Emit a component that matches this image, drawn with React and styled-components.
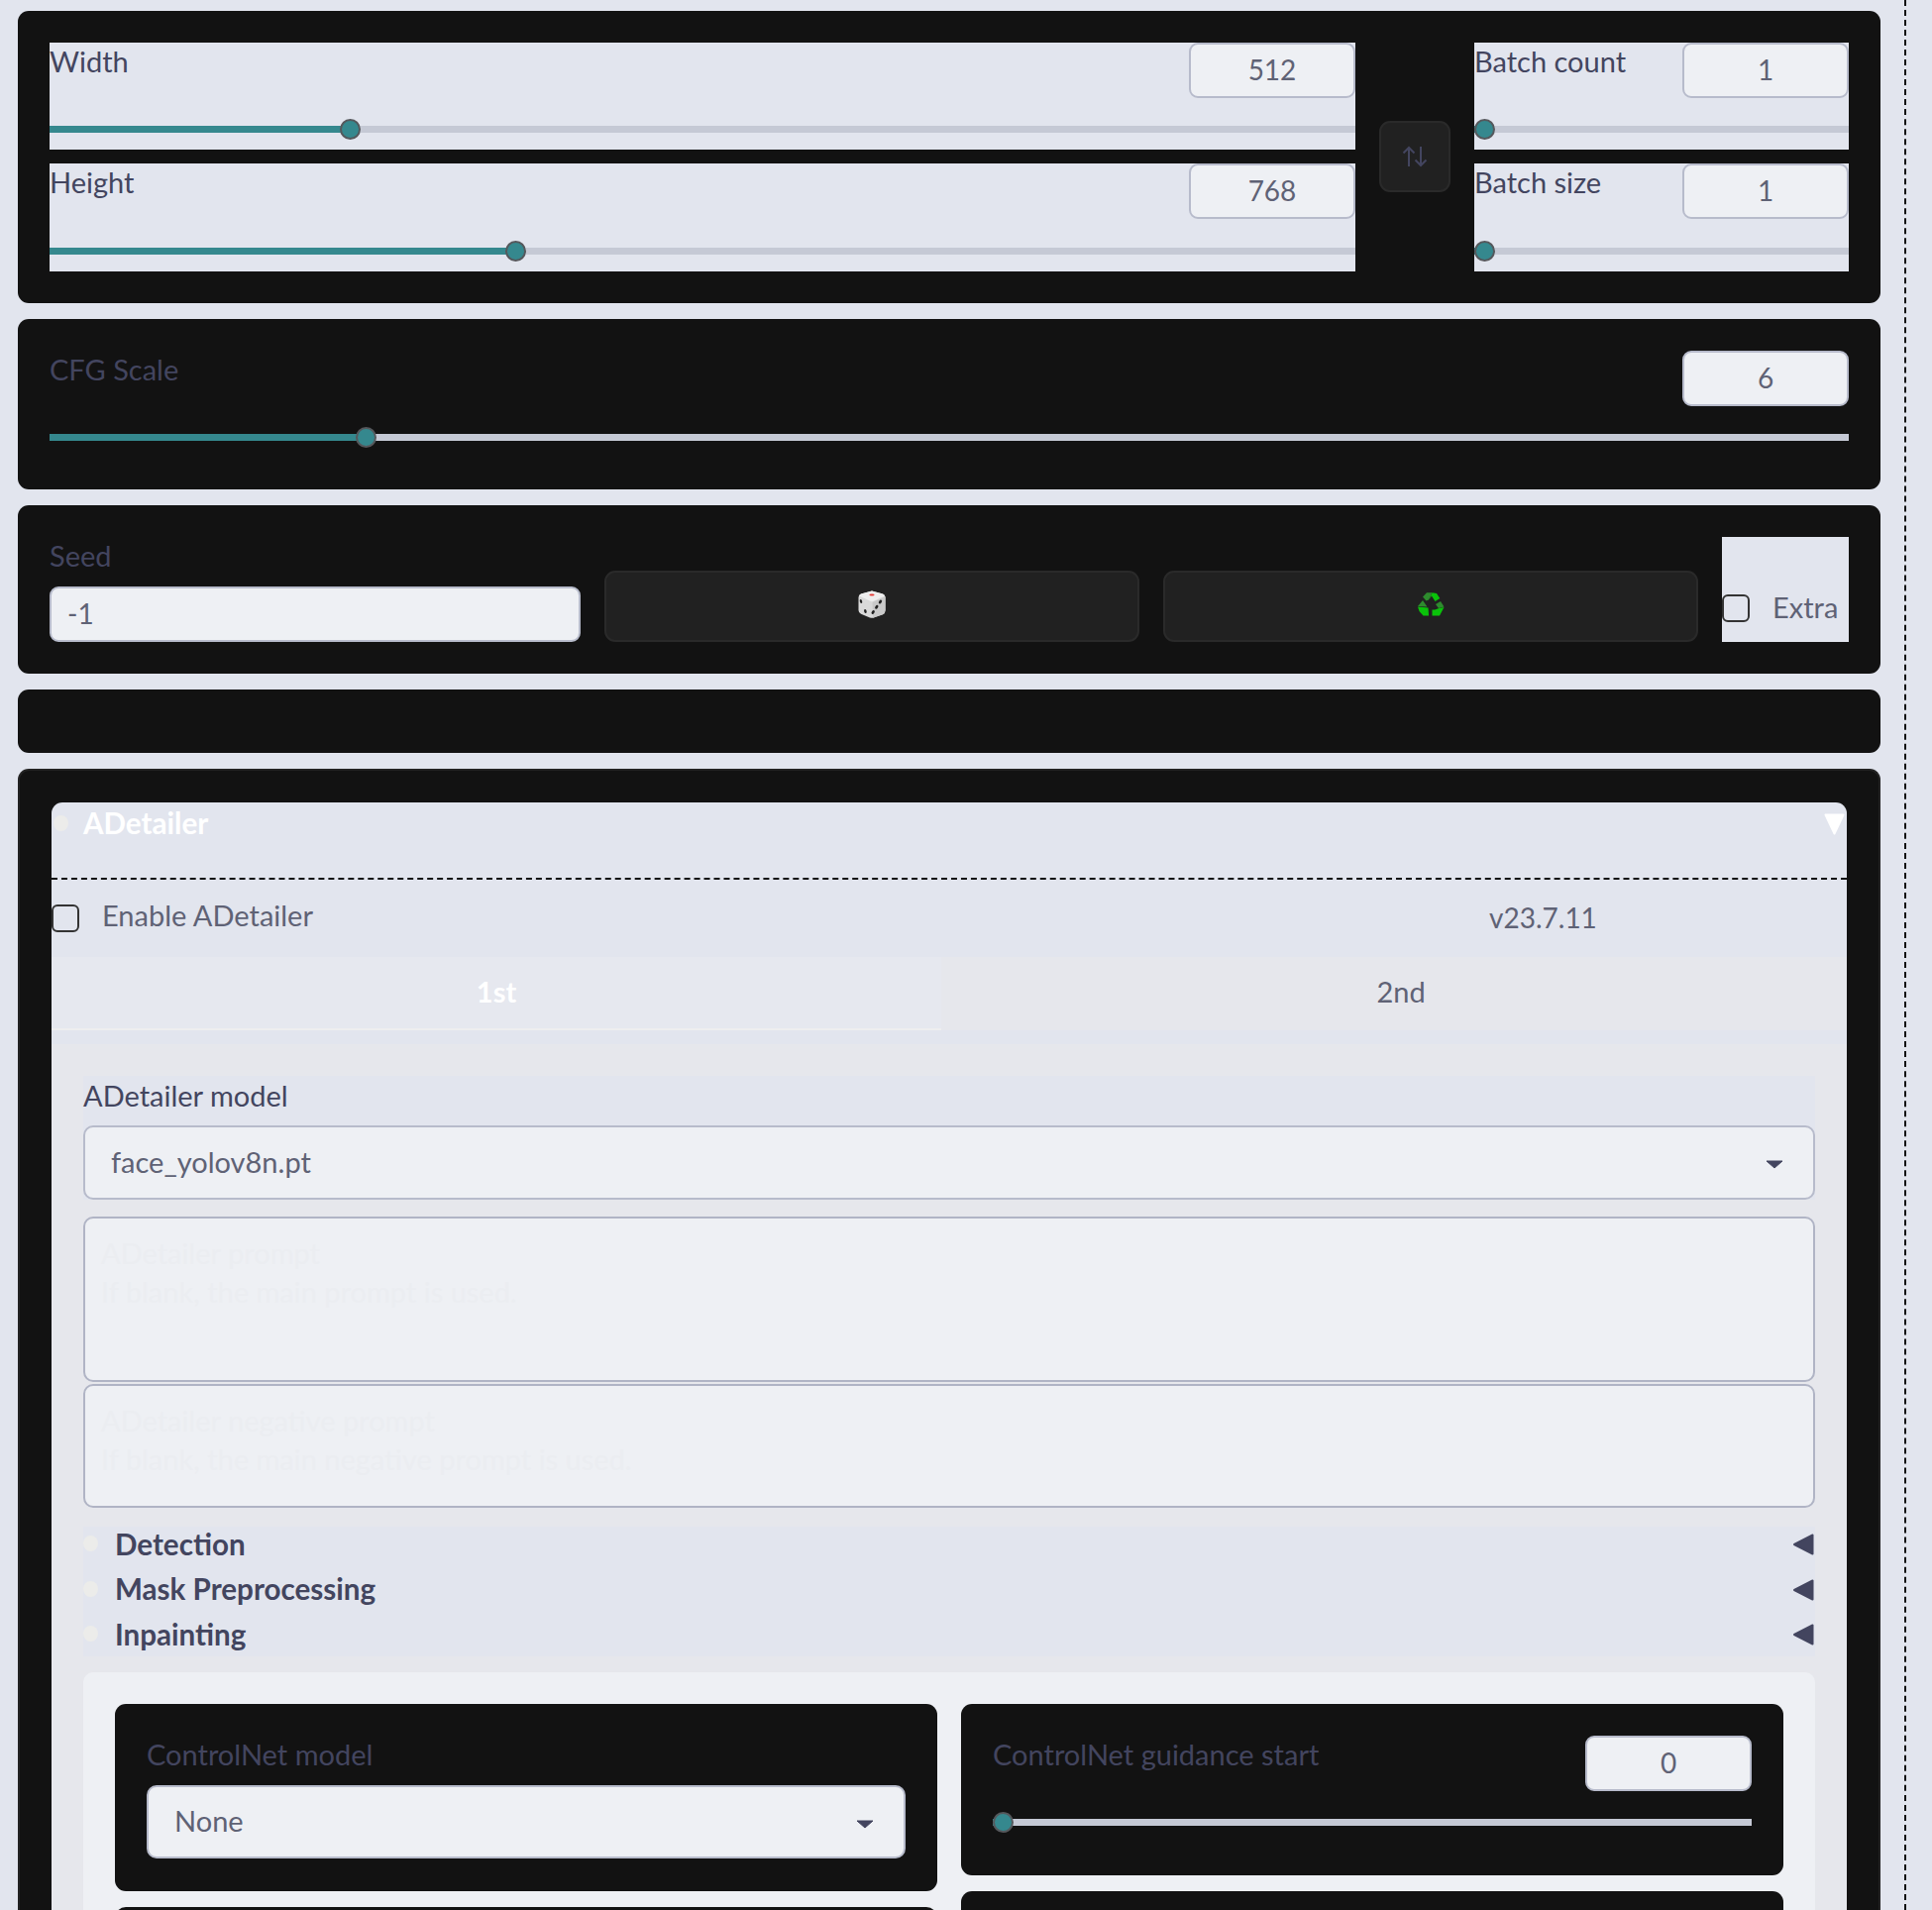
import React from "react";
import styled, { createGlobalStyle } from "styled-components";

const Global = createGlobalStyle`
  html, body { margin: 0; padding: 0; background: #e2e5ee; height: 1928px; overflow: hidden; }
  * { box-sizing: border-box; }
  body { font-family: "Lato", "Noto Sans", sans-serif; font-size: 29px; color: #43455f; }
`;

const Page = styled.div`
  width: 1924px;
  height: 1928px;
  overflow: hidden;
  padding: 11px 24px 0 18px;
  border-right: 2px dashed #111;
  display: flex;
  flex-direction: column;
  gap: 16px;
`;

const Panel = styled.section`
  background: #121212;
  border-radius: 11px;
  padding: 32px;
  min-height: 64px;
  flex-shrink: 0;
`;

const BorderedPanel = styled(Panel)`
  border: 2px solid #222;
  flex-grow: 1;
  border-bottom: none;
`;

const SizeGrid = styled.div`
  display: grid;
  grid-template-columns: 1318px 72px 378px;
  grid-template-rows: 108px 109px;
  column-gap: 24px;
  row-gap: 14px;
`;

const SwapButton = styled.button`
  grid-column: 2;
  grid-row: 1 / span 2;
  align-self: center;
  width: 72px;
  height: 72px;
  margin-bottom: 1px;
  padding: 0;
  background: #212121;
  border: 2px solid #2a2a2a;
  border-radius: 11px;
  display: flex;
  align-items: center;
  justify-content: center;
`;

const FieldRoot = styled.div`
  background: ${(p) => (p.$light ? "#e2e5ee" : "transparent")};
  height: ${(p) => p.$h || 108}px;
  padding-bottom: 17px;
  display: flex;
  flex-direction: column;
  justify-content: space-between;
  grid-column: ${(p) => p.$col || "auto"};
`;

const FieldHead = styled.div`
  display: flex;
  justify-content: space-between;
  align-items: flex-start;
  height: 56px;
`;

const FieldLabel = styled.label`
  line-height: 38px;
  color: #43455f;
  display: block;
`;

const NumberBox = styled.div`
  width: 168px;
  height: 56px;
  background: #eef0f4;
  border: 2px solid #b7bbcb;
  border-radius: 9px;
  color: #5f6275;
  text-align: center;
  font-size: 28px;
  line-height: 50px;
`;

const TrackRoot = styled.div`
  position: relative;
  height: 7px;
  background: #c5c9d5;
`;

const TrackFill = styled.div`
  height: 100%;
  background: #35888e;
`;

const Thumb = styled.div`
  position: absolute;
  top: -7px;
  width: 21px;
  height: 21px;
  margin-left: -10.5px;
  border-radius: 50%;
  background: #35888e;
  border: 2px solid #55585c;
`;

function Slider({ min, max, value }) {
  const f = (value - min) / (max - min);
  const at = `calc(10px + (100% - 20px) * ${f})`;
  return (
    <TrackRoot>
      <TrackFill style={{ width: at }} />
      <Thumb style={{ left: at }} />
    </TrackRoot>
  );
}

function SliderField({ label, min, max, value, light, h, col }) {
  return (
    <FieldRoot $light={light} $h={h} $col={col}>
      <FieldHead>
        <FieldLabel>{label}</FieldLabel>
        <NumberBox>{value}</NumberBox>
      </FieldHead>
      <Slider min={min} max={max} value={value} />
    </FieldRoot>
  );
}

const SeedGrid = styled.div`
  display: grid;
  grid-template-columns: 536px 1fr 1fr 128px;
  column-gap: 24px;
  height: 106px;
`;

const SeedColumn = styled.div`
  display: flex;
  flex-direction: column;
  justify-content: flex-end;
`;

const SeedLabel = styled.div`
  line-height: 38px;
  margin-bottom: 12px;
  color: #43455f;
`;

const SeedInput = styled.div`
  height: 56px;
  background: #eef0f4;
  border: 2px solid #b7bbcb;
  border-radius: 9px;
  padding-left: 16px;
  color: #5f6275;
  font-size: 28px;
  line-height: 50px;
`;

const DarkButton = styled.button`
  align-self: end;
  height: 72px;
  padding: 0 0 4px;
  background: #212121;
  border: 2px solid #2a2a2a;
  border-radius: 11px;
  display: flex;
  align-items: center;
  justify-content: center;
`;

const ExtraBox = styled.div`
  background: #e2e5ee;
  display: flex;
  align-items: flex-start;
  padding-top: 58px;
  gap: 23px;
`;

const Check = styled.span`
  display: block;
  width: 28px;
  height: 28px;
  flex-shrink: 0;
  border: 2px solid #333;
  border-radius: 6px;
`;

const CheckText = styled.span`
  color: #5f6275;
  line-height: 25px;
`;

const Accordion = styled.div`
  background: #e2e5ee;
  border-radius: 11px 11px 0 0;
  height: 1400px;
`;

const AccHead = styled.div`
  height: 78px;
  border-bottom: 2px dashed #111;
  display: flex;
  align-items: flex-start;
  justify-content: space-between;
  padding: 0 2px;
`;

const TitleWrap = styled.div`
  display: flex;
  align-items: center;
  gap: ${(p) => p.$gap}px;
  height: ${(p) => p.$h}px;
`;

const Dot = styled.span`
  width: 15px;
  height: 16px;
  border-radius: 50%;
  background: #ececea;
`;

const AccTitle = styled.span`
  font-size: 29.6px;
  font-weight: 700;
  color: #fff;
`;

const CaretDown = styled.svg`
  margin-top: 11px;
  display: block;
`;

const EnableRow = styled.div`
  height: 78px;
  display: grid;
  grid-template-columns: 1fr 361px;
  padding-top: 25px;
`;

const CheckGroup = styled.div`
  display: flex;
  gap: 23px;
  align-items: flex-start;
`;

const EnableText = styled(CheckText)`
  line-height: 22px;
`;

const Version = styled.div`
  color: #5f6275;
  font-size: 28px;
  line-height: 26px;
`;

const Tabs = styled.div`
  display: grid;
  grid-template-columns: 898px 1fr;
  height: 74px;
`;

const Tab = styled.div`
  background: ${(p) => (p.$active ? "#e6e8ef" : "#e6e7ec")};
  border-bottom: ${(p) => (p.$active ? "2px solid #eeeeef" : "none")};
  color: ${(p) => (p.$active ? "#fff" : "#5f6275")};
  font-weight: ${(p) => (p.$active ? 700 : 400)};
  padding-left: ${(p) => (p.$active ? 0 : 14)}px;
  text-align: center;
  line-height: 70px;
`;

const TabBody = styled.div`
  margin-top: 14px;
  background: #e6e7ec;
  padding: 32px;
  height: 1100px;
  display: flex;
  flex-direction: column;
`;

const ModelBlock = styled.div`
  background: #e2e5ee;
  padding-top: 2px;
`;

const ModelLabel = styled.div`
  line-height: 36px;
  margin-bottom: 12px;
  color: #43455f;
`;

const SelectBox = styled.div`
  height: ${(p) => p.$h}px;
  background: #eef0f4;
  border: 2px solid #b7bbcb;
  border-radius: 10px;
  padding: 0 30px 0 26px;
  display: flex;
  align-items: center;
  justify-content: space-between;
  color: #5f6275;
`;

const SelectText = styled.span`
  margin-bottom: 3px;
`;

const PromptBox = styled.div`
  height: ${(p) => p.$h}px;
  margin-top: ${(p) => p.$mt}px;
  background: #eef0f4;
  border: 2px solid #b0b4c5;
  border-radius: 10px;
  padding: 16px 16px 0;
  color: #ebedf1;
  line-height: 38.5px;
  flex-shrink: 0;
`;

const Sections = styled.div`
  margin-top: 19px;
  background: #e2e5ee;
  padding-bottom: 6px;
  display: flex;
  flex-direction: column;
  gap: 11.5px;
`;

const SectionRow = styled.div`
  height: 34px;
  display: flex;
  align-items: center;
  justify-content: space-between;
`;

const SectionName = styled.span`
  font-size: 29.6px;
  font-weight: 700;
  color: #43455f;
`;

const Light = styled.div`
  margin-top: 16px;
  background: #eef0f4;
  border-radius: 10px;
  padding: 32px;
  display: grid;
  grid-template-columns: 1fr 1fr;
  column-gap: 24px;
`;

const Col = styled.div`
  display: flex;
  flex-direction: column;
  gap: 16px;
`;

const Card = styled.div`
  background: #121212;
  border-radius: 11px;
  padding: 32px;
  height: ${(p) => p.$h}px;
`;

const CardLabel = styled.div`
  line-height: 38px;
  margin-bottom: 12px;
  color: #43455f;
`;

const Arrow = () => (
  <svg width="18" height="9" viewBox="0 0 18 9" style={{ marginTop: 4 }}>
    <polygon points="1,1 17,1 9,8" fill="#43455f" stroke="#43455f" strokeLinejoin="round" />
  </svg>
);

const CaretLeft = () => (
  <svg width="22" height="22" viewBox="0 0 22 22" style={{ marginTop: 2, marginRight: 1 }}>
    <polygon points="20.5,1.5 20.5,20.5 2,11" fill="#43455f" stroke="#43455f" strokeWidth="2" strokeLinejoin="round" />
  </svg>
);

const SwapIcon = () => (
  <svg width="28" height="24" viewBox="0 0 28 24" fill="none" stroke="#43455f" strokeWidth="2">
    <path d="M8 22V3M2.5 8.5 8 3l5.5 5.5" />
    <path d="M20 2v19M14.5 15.5 20 21l5.5-5.5" />
  </svg>
);

const Dice = () => (
  <svg width="28" height="28" viewBox="0 0 28 28">
    <path d="M14 .5 25 3.5Q27.6 4.5 27.6 7V20Q27.5 23 25 24.2L15 27.8Q13.5 28 12 27.5L3 23.8Q.7 23 .5 20V7Q.5 4.5 3 3.5Z" fill="#d9d9d9" />
    <path d="M14 .5 25 3.5Q27 4.3 27 5.5L15 11Q14 11.4 13 11L1 5.5Q1.2 4.3 3 3.5Z" fill="#eeeeee" />
    <path d="M27.6 6V20Q27.5 23 25 24.2L15 27.8 14.5 12Z" fill="#c9c9c9" />
    <ellipse cx="14" cy="4.5" rx="2.6" ry="1.1" fill="#e53935" />
    <ellipse cx="3" cy="11" rx="1.2" ry="2" fill="#222" transform="rotate(-15 3 11)" />
    <ellipse cx="7.4" cy="21" rx="1.3" ry="2" fill="#222" transform="rotate(-15 7.4 21)" />
    <ellipse cx="22.5" cy="11.5" rx="1.4" ry="2.1" fill="#222" transform="rotate(35 22.5 11.5)" />
    <ellipse cx="18.8" cy="16.8" rx="1.4" ry="2.1" fill="#222" transform="rotate(35 18.8 16.8)" />
    <ellipse cx="15.2" cy="22" rx="1.4" ry="2.1" fill="#222" transform="rotate(35 15.2 22)" />
  </svg>
);

const Recycle = () => (
  <svg width="27" height="24" viewBox="0 0 27 24">
    <polygon points="5,4.5 9,.3 14.5,.3 11,7.5 8.5,8.5" fill="#2e8b2e" />
    <polygon points="14.5,.3 19,1 22.3,6 17.5,9 14,3.5 11.5,7" fill="#0ac20a" />
    <polygon points="0,14 5,8 9.5,14.5" fill="#2e8b2e" />
    <polygon points="0,14.5 10.5,15.5 11,23.5 5.5,23.5 1.5,19" fill="#0ac20a" />
    <polygon points="18,12 23,9 26.5,14.5 21,16" fill="#2e8b2e" />
    <polygon points="21.5,16 26.5,15 22,23.5 14.5,23.5 14.5,17.5 17,17.5" fill="#0ac20a" />
  </svg>
);

export default function App() {
  return (
    <>
      <Global />
      <Page>
        <Panel>
          <SizeGrid>
            <SliderField label="Width" min={64} max={2048} value={512} light col={1} />
            <SwapButton aria-label="Swap">
              <SwapIcon />
            </SwapButton>
            <SliderField label="Batch count" min={1} max={100} value={1} light col={3} />
            <SliderField label="Height" min={64} max={2048} value={768} light h={109} col={1} />
            <SliderField label="Batch size" min={1} max={8} value={1} light h={109} col={3} />
          </SizeGrid>
        </Panel>

        <Panel>
          <SliderField label="CFG Scale" min={1} max={30} value={6} />
        </Panel>

        <Panel>
          <SeedGrid>
            <SeedColumn>
              <SeedLabel>Seed</SeedLabel>
              <SeedInput>-1</SeedInput>
            </SeedColumn>
            <DarkButton aria-label="Random seed">
              <Dice />
            </DarkButton>
            <DarkButton aria-label="Reuse seed">
              <Recycle />
            </DarkButton>
            <ExtraBox>
              <Check />
              <CheckText>Extra</CheckText>
            </ExtraBox>
          </SeedGrid>
        </Panel>

        <Panel />

        <BorderedPanel>
          <Accordion>
            <AccHead>
              <TitleWrap $gap={15} $h={41}>
                <Dot />
                <AccTitle>ADetailer</AccTitle>
              </TitleWrap>
              <CaretDown width="21" height="22" viewBox="0 0 21 22">
                <polygon points="1.5,1.5 19.5,1.5 10.5,20.5" fill="#fff" stroke="#fff" strokeWidth="2" strokeLinejoin="round" />
              </CaretDown>
            </AccHead>
            <EnableRow>
              <CheckGroup>
                <Check />
                <EnableText>Enable ADetailer</EnableText>
              </CheckGroup>
              <Version>v23.7.11</Version>
            </EnableRow>
            <Tabs>
              <Tab $active>1st</Tab>
              <Tab>2nd</Tab>
            </Tabs>
            <TabBody>
              <ModelBlock>
                <ModelLabel>ADetailer model</ModelLabel>
                <SelectBox $h={75}>
                  <SelectText>face_yolov8n.pt</SelectText>
                  <Arrow />
                </SelectBox>
              </ModelBlock>
              <PromptBox $h={167} $mt={17}>
                ADetailer prompt
                <br />
                If blank, the main prompt is used.
              </PromptBox>
              <PromptBox $h={125} $mt={2}>
                ADetailer negative prompt
                <br />
                If blank, the main negative prompt is used.
              </PromptBox>
              <Sections>
                {["Detection", "Mask Preprocessing", "Inpainting"].map((name) => (
                  <SectionRow key={name}>
                    <TitleWrap $gap={17} $h={34}>
                      <Dot />
                      <SectionName>{name}</SectionName>
                    </TitleWrap>
                    <CaretLeft />
                  </SectionRow>
                ))}
              </Sections>
              <Light>
                <Col>
                  <Card $h={189}>
                    <CardLabel>ControlNet model</CardLabel>
                    <SelectBox $h={74}>
                      <SelectText>None</SelectText>
                      <Arrow />
                    </SelectBox>
                  </Card>
                  <Card $h={200} />
                </Col>
                <Col>
                  <Card $h={173}>
                    <SliderField label="ControlNet guidance start" min={0} max={1} value={0} />
                  </Card>
                  <Card $h={200} />
                </Col>
              </Light>
            </TabBody>
          </Accordion>
        </BorderedPanel>
      </Page>
    </>
  );
}
